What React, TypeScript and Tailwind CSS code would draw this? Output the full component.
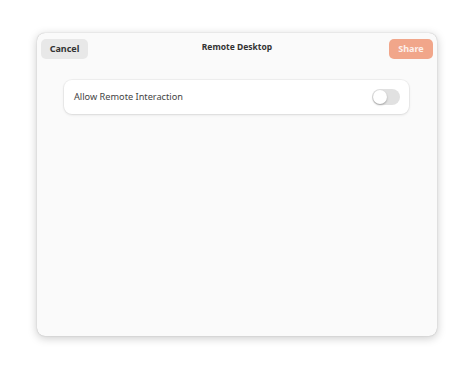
export default function App() {
  return (
    <div className="min-h-screen w-full bg-white pt-[33px] pl-[37px]" style={{ fontFamily: '"Noto Sans", "Open Sans", sans-serif' }}>
      <div className="w-[400px] h-[303px] rounded-[8px] bg-[#fafafa] shadow-[0_2px_10px_rgba(0,0,0,0.22),0_0_1px_rgba(0,0,0,0.3)] flex flex-col">
        <div className="relative flex items-center justify-between px-[4px] pt-[4px] h-[28px]">
          <button className="h-[20px] w-[47px] rounded-[5px] bg-[#e8e8e8] text-[9px] font-bold text-[#333]">Cancel</button>
          <span className="absolute left-0 right-0 top-[8px] text-center text-[8.5px] font-bold text-[#333] pointer-events-none">Remote Desktop</span>
          <button className="h-[20px] w-[44px] rounded-[5px] bg-[#f1a68a] text-[9px] font-bold text-[#fdf0ea]">Share</button>
        </div>
        <div className="px-[27px] pt-[19px]">
          <div className="h-[34px] w-[345px] rounded-[8px] bg-white shadow-[0_0_0_1px_rgba(0,0,0,0.04),0_1px_3px_rgba(0,0,0,0.1)] flex items-center justify-between pl-[10px] pr-[9px]">
            <span className="text-[9.2px] text-[#444]">Allow Remote Interaction</span>
            <div className="w-[28px] h-[16px] rounded-full bg-[#e1e1e1] flex items-center pl-[1px]">
              <div className="w-[14px] h-[14px] rounded-full bg-white shadow-[0_1px_2px_rgba(0,0,0,0.3)]" />
            </div>
          </div>
        </div>
      </div>
    </div>
  );
}
